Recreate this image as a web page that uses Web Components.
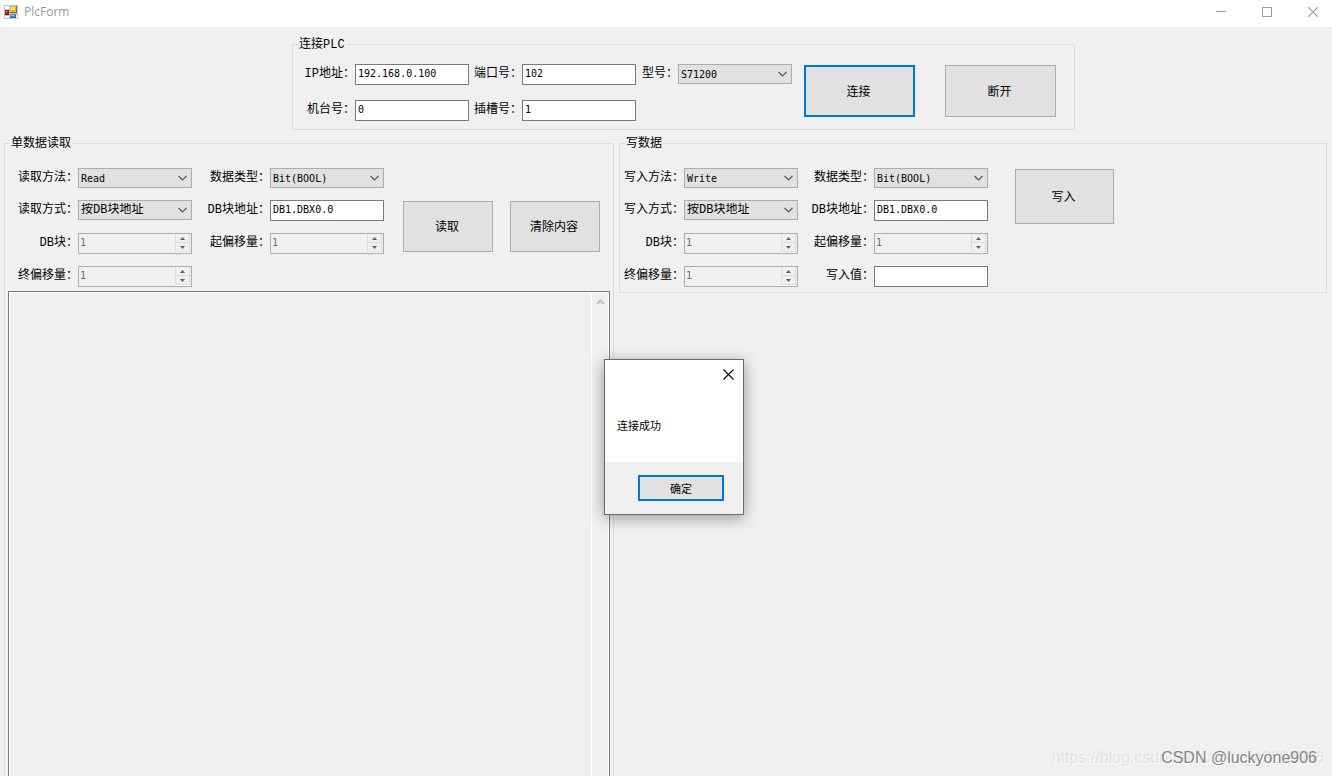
<!DOCTYPE html>
<html lang="zh-CN">
<head>
<meta charset="utf-8">
<title>PlcForm</title>
<style>
  html, body { margin: 0; height: 100%; overflow: hidden; }
  body { background: #f0f0f0; color: #000; font: 12px/15px "Liberation Mono", "Noto Sans CJK SC", monospace; }
</style>
</head>
<body>
<plc-form></plc-form>
<script>
const define = (name, html, setup) => customElements.define(name, class extends HTMLElement {
  connectedCallback() {
    if (this.shadowRoot) return;
    const t = document.createElement('template');
    t.innerHTML = html;
    this.attachShadow({ mode: 'open' }).append(t.content.cloneNode(true));
    if (setup) setup(this, this.shadowRoot);
  }
});

const fieldCss = `
  :host { display: contents; }
  * { box-sizing: border-box; }
  label { display: flex; justify-content: flex-end; align-items: center; height: 21px; white-space: nowrap; }
  .latin { font-family: "DejaVu Sans Mono", "Noto Sans CJK SC", monospace; font-size: 10px; }
`;

define('title-bar', `
  <style>
    :host { display: flex; align-items: center; height: 27px; padding-left: 4px; background: #fff; color: #999;
      font: 12px/16px "Open Sans", "Noto Sans", sans-serif; box-sizing: border-box; overflow: hidden; }
    .caption { flex: 1; display: flex; align-items: center; gap: 6px; height: 24px; align-self: flex-start; }
    .tools { display: flex; align-self: flex-start; margin-right: -4px; }
    button { width: 46px; height: 23px; padding: 0; border: 0; background: none; display: grid; place-items: center; }
    svg { display: block; }
  </style>
  <div class="caption">
    <svg width="14" height="14" viewBox="0 0 14 14" aria-hidden="true">
      <rect width="14" height="14" fill="#c4c4c4"/>
      <path d="M1 1h4v3H1zM1 11h4v2H1zM12 10h1v3h-1z" fill="#fff"/>
      <rect x="5" y="0" width="9" height="9" fill="#c4c4c4"/>
      <rect x="6" y="1" width="7" height="7" fill="#8d6c12"/><rect x="6" y="1" width="6" height="6" fill="#e9b526"/><rect x="7" y="2" width="4" height="3" fill="#fbe27c"/>
      <rect x="1" y="5" width="4" height="5" fill="#7d0b0b"/><rect x="1" y="5" width="3" height="4" fill="#c32222"/><rect x="2" y="6" width="1" height="1" fill="#f29a9a"/>
      <rect x="6" y="9" width="6" height="4" fill="#2b62bb"/><rect x="6" y="9" width="5" height="3" fill="#4d8ae8"/><rect x="7" y="10" width="3" height="1" fill="#9dc4ff"/>
    </svg>
    <span>PlcForm</span>
  </div>
  <div class="tools">
    <button aria-label="最小化"><svg width="10" height="11" viewBox="0 0 10 11"><path d="M0 5.5h10" stroke="#999"/></svg></button>
    <button aria-label="最大化"><svg width="10" height="10" viewBox="0 0 10 10"><path d="M.5.5h9v9h-9z" fill="none" stroke="#999"/></svg></button>
    <button aria-label="关闭"><svg width="10" height="10" viewBox="0 0 10 10"><path d="M0 0l10 10M10 0L0 10" stroke="#999" stroke-width="1.1"/></svg></button>
  </div>
`);

define('group-box', `
  <style>
    :host { display: flex; flex-direction: column; min-width: 0; }
    fieldset { flex: 1; display: flex; flex-direction: column; min-width: 0; margin: 0; padding: 0; border: 1px solid #dcdcdc; }
    :host([open-ended]) fieldset { border-bottom: 0; }
    legend { margin-left: 5px; padding: 0 1px; height: 15px; line-height: 16px; white-space: nowrap; }
  </style>
  <fieldset><legend></legend><slot></slot></fieldset>
`, (host, root) => { root.querySelector('legend').textContent = host.getAttribute('caption'); });

define('text-field', `
  <style>${fieldCss}
    input { width: 100%; height: 21px; margin: 0; padding: 0 2px 3px; border: 1px solid #7a7a7a; border-radius: 0; background: #fff; color: #000; outline: 0; }
  </style>
  <label for="f"></label><input id="f" class="latin" type="text">
`, (host, root) => {
  root.querySelector('label').textContent = host.getAttribute('label');
  root.querySelector('input').value = host.getAttribute('value') || '';
});

define('select-field', `
  <style>${fieldCss}
    .box { display: grid; height: 20px; }
    select { grid-area: 1 / 1; width: 100%; height: 20px; margin: 0; padding: 0 20px 0 2px; appearance: none; border: 1px solid #adadad; border-radius: 0;
      background: #e1e1e1; color: #000; font: inherit; outline: 0; }
    select.latin { font-family: "DejaVu Sans Mono", monospace; font-size: 10px; }
    svg { grid-area: 1 / 1; justify-self: end; align-self: center; margin-right: 5px; pointer-events: none; }
  </style>
  <label for="f"></label>
  <div class="box"><select id="f"></select>
    <svg width="9" height="6" viewBox="0 0 9 6" aria-hidden="true"><path d="M.5 1l4 4 4-4" fill="none" stroke="#555" stroke-width="1.2"/></svg></div>
`, (host, root) => {
  const v = host.getAttribute('value'), s = root.querySelector('select');
  root.querySelector('label').textContent = host.getAttribute('label');
  s.add(new Option(v));
  if (/^[\x20-\x7e]+$/.test(v)) s.className = 'latin';
});

define('spin-field', `
  <style>${fieldCss}
    .box { display: flex; height: 21px; border: 1px solid #adadb1; padding-right: 1px; }
    input { flex: 1; min-width: 0; height: 18px; margin: 0; padding: 0 1px 2px; border: 0; background: none; color: #6d6d6d; appearance: textfield; }
    input::-webkit-inner-spin-button { appearance: none; margin: 0; }
    .spin { width: 15px; display: grid; grid-template-rows: 9px 9px; border-bottom: 1px solid #fff; }
    button { margin: 0; padding: 0; border: 1px solid #dcdcdc; border-top-width: 0; background: #f0f0f0; display: grid; place-items: center; }
    svg { display: block; }
  </style>
  <label for="f"></label>
  <div class="box"><input id="f" class="latin" type="number" value="1" disabled>
    <div class="spin">
      <button disabled aria-label="增加"><svg width="5" height="3" viewBox="0 0 5 3"><path d="M0 3L2.500 0 5 3z" fill="#606060"/></svg></button>
      <button disabled aria-label="减少"><svg width="5" height="3" viewBox="0 0 5 3"><path d="M0 0h5L2.500 3z" fill="#606060"/></svg></button>
    </div></div>
`, (host, root) => { root.querySelector('label').textContent = host.getAttribute('label'); });

define('push-button', `
  <style>
    :host { display: block; align-self: start; }
    button { display: block; box-sizing: border-box; width: 100%; height: 100%; margin: 0; padding: var(--button-pad, 4px 2px 0 0); border: 1px solid #adadad; border-radius: 0;
      background: #e1e1e1; color: #000; font: inherit; }
    :host([default]) button { border: 2px solid #0078d7; }
  </style>
  <button type="button"><slot></slot></button>
`);

define('memo-box', `
  <style>
    :host { display: flex; box-sizing: border-box; min-height: 0; border: 1px solid #7a7a7a; border-bottom: 0; background: #f0f0f0; }
    textarea { flex: 1; margin: 0; padding: 2px; border: 1px solid #fff; border-width: 1px 0 0 1px; background: none; resize: none; overflow: hidden; font: inherit; outline: 0; }
    .bar { width: 16px; border: 1px solid #fff; border-bottom: 0; }
    button { display: grid; place-items: center; width: 16px; height: 18px; padding: 0; border: 0; background: none; }
  </style>
  <textarea readonly aria-label="读取结果"></textarea>
  <div class="bar"><button disabled aria-label="向上滚动"><svg width="9" height="6" viewBox="0 0 9 6"><path d="M1 5l3.500-3.500L8 5" fill="none" stroke="#bfbfbf" stroke-width="2"/></svg></button></div>
`);

define('message-box', `
  <style>
    :host { display: block; position: absolute; left: 604px; top: 359px; font: 11px/16px "Noto Sans CJK SC", sans-serif; }
    dialog { position: static; display: flex; flex-direction: column; box-sizing: border-box; width: 140px; height: 156px; margin: 0; padding: 0;
      border: 1px solid #6a6a6a; background: #fff; color: #000; box-shadow: 0 3px 14px rgba(0, 0, 0, .38); }
    .close { align-self: flex-end; display: grid; place-items: center; width: 30px; height: 28px; padding: 0; border: 0; background: none; }
    p { flex: 1; margin: 0; padding: 29px 12px 0; }
    footer { display: flex; justify-content: flex-end; box-sizing: border-box; height: 52px; padding: 13px 19px; background: #f0f0f0; }
    push-button { width: 86px; height: 26px; --button-pad: 0; }
  </style>
  <dialog open>
    <button class="close" aria-label="关闭"><svg width="11" height="11" viewBox="0 0 11 11"><path d="M.5.5l10 10M10.500.5l-10 10" stroke="#000" stroke-width="1.1"/></svg></button>
    <p>连接成功</p>
    <footer><push-button default>确定</push-button></footer>
  </dialog>
`);

define('page-watermark', `
  <style>
    :host { position: absolute; right: 15px; bottom: 8px; display: grid; justify-items: end; font: 16px/20px "Liberation Sans", Arial, sans-serif; white-space: nowrap; pointer-events: none; }
    span { grid-area: 1 / 1; }
    .url { margin-right: -7px; color: #e2e2e2; text-shadow: 1px 1px 0 #fafafa; }
    .user { color: #858585; text-shadow: 1px 1px 0 #fafafa; }
  </style>
  <span class="url">https://blog.csdn.net/weixin_43290906</span>
  <span class="user">CSDN @luckyone906</span>
`);

define('plc-form', `
  <style>
    :host { display: flex; flex-direction: column; height: 100vh; overflow: hidden; position: relative; }
    title-bar { flex: none; }
    main { flex: 1; min-height: 0; display: flex; flex-direction: column; gap: 6px; padding: 10px 5px 0 4px; }
    .connect { align-self: flex-start; margin-left: 288px; }
    .connect .grid { display: grid; grid-template-columns: 62px 114px 53px 114px 42px 114px; grid-template-rows: 21px 21px; row-gap: 15px; }
    .row { display: flex; padding: 12px 18px 8px 0; }
    .actions { display: flex; gap: 30px; margin-left: 12px; padding-top: 1px; }
    .actions push-button { width: 111px; height: 52px; }
    .panels { flex: 1; min-height: 0; display: flex; align-items: flex-start; gap: 5px; }
    .read { width: 610px; flex: none; align-self: stretch; }
    .write { flex: 1; }
    .fields { display: grid; grid-template-rows: 20px 21px 21px 21px; row-gap: 12px; padding-top: 17px; }
    .read .fields { flex: none; grid-template-columns: 73px 114px 78px 114px 19px 90px 17px 90px; padding-bottom: 4px; }
    .write .fields { grid-template-columns: 64px 114px 76px 114px 27px 99px; padding-bottom: 5px; }
    .fields push-button { margin-top: 1px; }
    .read push-button { grid-row: 2 / span 2; height: 51px; }
    .fetch { grid-column: 6; }
    .clear { grid-column: 8; }
    .send { grid-column: 6; grid-row: 1 / span 3; height: 55px; }
    .half { display: grid; grid-template-columns: subgrid; grid-column: 1 / span 4; }
    memo-box { flex: 1; margin: 0 3px; }
  </style>
  <title-bar></title-bar>
  <main>
    <group-box class="connect" caption="连接PLC">
      <div class="row">
        <div class="grid">
          <text-field label="IP地址：" value="192.168.0.100"></text-field>
          <text-field label="端口号：" value="102"></text-field>
          <select-field label="型号：" value="S71200"></select-field>
          <text-field label="机台号：" value="0"></text-field>
          <text-field label="插槽号：" value="1"></text-field>
        </div>
        <div class="actions">
          <push-button default>连接</push-button>
          <push-button>断开</push-button>
        </div>
      </div>
    </group-box>
    <div class="panels">
      <group-box class="read" caption="单数据读取" open-ended>
        <div class="fields">
          <div class="half"><select-field label="读取方法：" value="Read"></select-field><select-field label="数据类型：" value="Bit(BOOL)"></select-field></div>
          <div class="half"><select-field label="读取方式：" value="按DB块地址"></select-field><text-field label="DB块地址：" value="DB1.DBX0.0"></text-field></div>
          <div class="half"><spin-field label="DB块："></spin-field><spin-field label="起偏移量："></spin-field></div>
          <div class="half"><spin-field label="终偏移量："></spin-field></div>
          <push-button class="fetch">读取</push-button>
          <push-button class="clear">清除内容</push-button>
        </div>
        <memo-box></memo-box>
      </group-box>
      <group-box class="write" caption="写数据">
        <div class="fields">
          <div class="half"><select-field label="写入方法：" value="Write"></select-field><select-field label="数据类型：" value="Bit(BOOL)"></select-field></div>
          <div class="half"><select-field label="写入方式：" value="按DB块地址"></select-field><text-field label="DB块地址：" value="DB1.DBX0.0"></text-field></div>
          <div class="half"><spin-field label="DB块："></spin-field><spin-field label="起偏移量："></spin-field></div>
          <div class="half"><spin-field label="终偏移量："></spin-field><text-field label="写入值："></text-field></div>
          <push-button class="send">写入</push-button>
        </div>
      </group-box>
    </div>
  </main>
  <message-box></message-box>
  <page-watermark></page-watermark>
`);
</script>
</body>
</html>
